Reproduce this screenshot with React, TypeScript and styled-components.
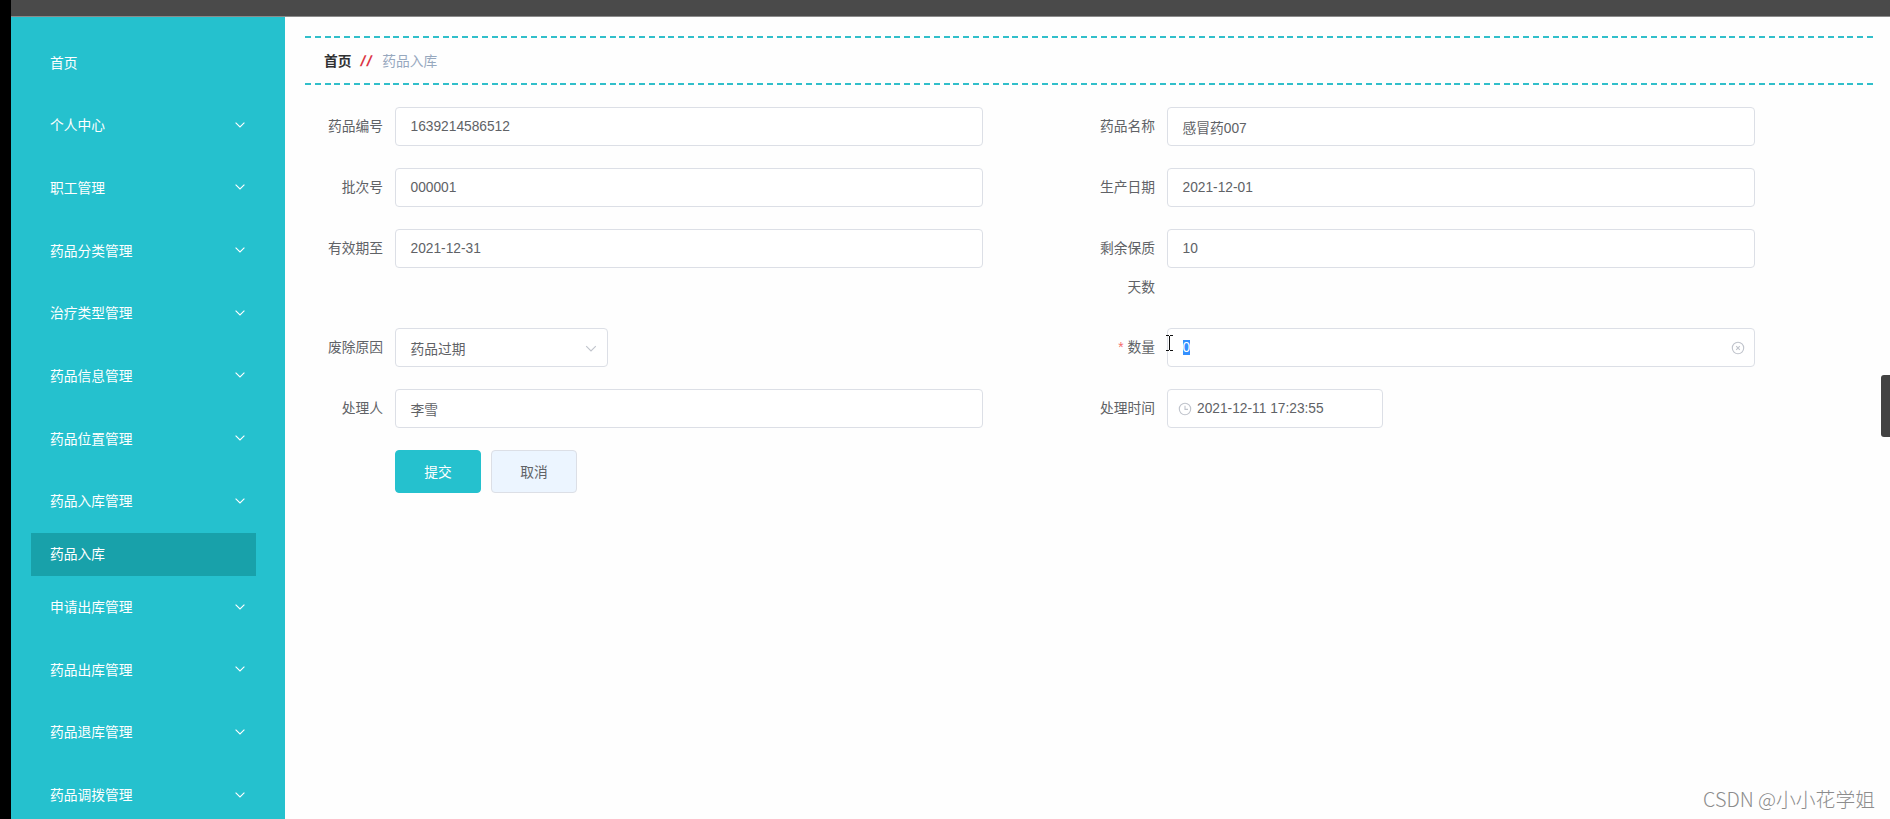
import React from 'react';
import styled, { createGlobalStyle, css } from 'styled-components';

const GlobalStyle = createGlobalStyle`
  * { box-sizing: border-box; }
  html, body { margin: 0; overflow: hidden; background: #fefefe; }
  body {
    font-family: "Liberation Sans", "Noto Sans CJK SC", sans-serif;
    font-size: 13.75px;
    color: #606266;
  }
`;

const Page = styled.div`
  position: relative;
  display: flex;
  width: 1890px;
  height: 819px;
  overflow: hidden;
  padding-left: 11px;
  background: #000;
`;

const Window = styled.div`
  flex: 1;
  display: flex;
  flex-direction: column;
  background: #fefefe;
`;

const TopBar = styled.div`
  flex: none;
  height: 17px;
  background: #4a4a4a;
  border-bottom: 1px solid #8b8b8b;
`;

const Body = styled.div`
  flex: 1;
  min-height: 0;
  display: flex;
`;

const Sidebar = styled.nav`
  width: 274px;
  flex: none;
  padding: 14.2px 29px 0 20px;
  background: #25c1ce;
  overflow: hidden;
`;

const MenuItem = styled.div<{ $active?: boolean }>`
  display: flex;
  align-items: center;
  justify-content: space-between;
  height: 62.7px;
  padding: 0 11px 2px 19px;
  color: #fff;
  ${({ $active }) =>
    $active &&
    css`
      height: 43px;
      background: #18a1aa;
    `}
`;

const MenuArrow = styled.svg`
  width: 10px;
  height: 6px;
  margin-top: 1px;
  fill: none;
  stroke: #fff;
  stroke-width: 1.1;
`;

const Main = styled.main`
  flex: 1;
  padding: 19px 17px 0 20px;
`;

const dashes = 'repeating-linear-gradient(90deg, #31bfca 0 6px, transparent 6px 9.824px)';

const Breadcrumb = styled.div`
  display: flex;
  align-items: center;
  height: 49px;
  padding: 0 0 2px 19px;
  background: ${dashes} top / 100% 2px no-repeat, ${dashes} bottom / 100% 2px no-repeat;
`;

const CrumbHome = styled.span`
  font-weight: 700;
  color: #303133;
`;

const CrumbSlash = styled.span`
  margin: 2px 9px 0 9px;
  font-size: 15px;
  font-weight: 700;
  letter-spacing: 2.2px;
  color: #dc3545;
  transform: skewX(-14deg);
`;

const CrumbCurrent = styled.span`
  color: #97a8be;
`;

const Form = styled.form`
  display: grid;
  grid-template-columns: 772px 772px;
  row-gap: 21.8px;
  padding-top: 22px;
`;

const Field = styled.div`
  display: flex;
  align-items: flex-start;
`;

const Label = styled.label`
  flex: none;
  width: 90px;
  padding: 0 12px 0 17.5px;
  line-height: 39px;
  text-align: right;
`;

const Required = styled.span`
  margin-right: 4px;
  color: #f56c6c;
`;

const InputBox = styled.div<{ $width?: number; $icon?: boolean }>`
  display: flex;
  align-items: center;
  width: ${({ $width = 588 }) => $width}px;
  height: 39px;
  padding: 0 9px 0 ${({ $icon }) => ($icon ? 9.5 : 14.5)}px;
  background: #fff;
  border: 1px solid #dcdfe6;
  border-radius: 4px;
`;

const Value = styled.span`
  flex: 1;
`;

const Selected = styled.span`
  padding: 0;
  background: #3390ff;
  color: #fff;
`;

const Icon = styled.svg`
  flex: none;
  width: 14px;
  height: 14px;
  fill: none;
  stroke: #c0c4cc;
  stroke-width: 1.1;
`;

const ClockIcon = styled(Icon)`
  margin-right: 5.5px;
`;

const Actions = styled.div`
  display: flex;
  gap: 10px;
  padding-left: 90px;
`;

const Button = styled.button<{ $primary?: boolean }>`
  width: 86px;
  height: 43px;
  padding: 0;
  border: 1px solid ${({ $primary }) => ($primary ? '#25c1ce' : '#dcdfe6')};
  border-radius: 4px;
  background: ${({ $primary }) => ($primary ? '#25c1ce' : '#ecf5ff')};
  color: ${({ $primary }) => ($primary ? '#fff' : '#606266')};
  font: inherit;
`;

const SideHandle = styled.div`
  position: absolute;
  top: 375px;
  right: 0;
  width: 9px;
  height: 62px;
  border-radius: 3px 0 0 3px;
  background: #424242;
`;

const TextCursor = styled.svg`
  position: absolute;
  left: 1166px;
  top: 335px;
  width: 7px;
  height: 16px;
  fill: none;
  stroke: #111;
  stroke-width: 1;
`;

const Watermark = styled.div`
  position: absolute;
  left: 1703px;
  top: 785px;
  font: 300 19.8px/28px "Noto Sans CJK SC", sans-serif;
  white-space: nowrap;
  color: #8c8c8c;
`;

type Entry = { text: string; leaf?: boolean; active?: boolean };

const menu: Entry[] = [
  { text: '首页', leaf: true },
  { text: '个人中心' },
  { text: '职工管理' },
  { text: '药品分类管理' },
  { text: '治疗类型管理' },
  { text: '药品信息管理' },
  { text: '药品位置管理' },
  { text: '药品入库管理' },
  { text: '药品入库', leaf: true, active: true },
  { text: '申请出库管理' },
  { text: '药品出库管理' },
  { text: '药品退库管理' },
  { text: '药品调拨管理' },
];

function TextField({ label, value }: { label: string; value: string }) {
  return (
    <Field>
      <Label>{label}</Label>
      <InputBox>
        <Value>{value}</Value>
      </InputBox>
    </Field>
  );
}

export default function App() {
  return (
    <Page>
      <GlobalStyle />
      <Window>
        <TopBar />
        <Body>
          <Sidebar>
            {menu.map((item) => (
              <MenuItem key={item.text} $active={item.active}>
                {item.text}
                {!item.leaf && (
                  <MenuArrow viewBox="0 0 10 6">
                    <path d="M.6.6 5 5 9.4.6" />
                  </MenuArrow>
                )}
              </MenuItem>
            ))}
          </Sidebar>
          <Main>
            <Breadcrumb>
              <CrumbHome>首页</CrumbHome>
              <CrumbSlash>//</CrumbSlash>
              <CrumbCurrent>药品入库</CrumbCurrent>
            </Breadcrumb>
            <Form>
              <TextField label="药品编号" value="1639214586512" />
              <TextField label="药品名称" value="感冒药007" />
              <TextField label="批次号" value="000001" />
              <TextField label="生产日期" value="2021-12-01" />
              <TextField label="有效期至" value="2021-12-31" />
              <TextField label="剩余保质天数" value="10" />
              <Field>
                <Label>废除原因</Label>
                <InputBox $width={213}>
                  <Value>药品过期</Value>
                  <Icon viewBox="0 0 14 14">
                    <path d="M2.2 5.2 7 10 11.8 5.2" />
                  </Icon>
                </InputBox>
              </Field>
              <Field>
                <Label>
                  <Required>*</Required>数量
                </Label>
                <InputBox>
                  <Value>
                    <Selected>0</Selected>
                  </Value>
                  <Icon viewBox="0 0 14 14">
                    <circle cx="7" cy="7" r="5.7" />
                    <path d="M5.2 5.2 8.8 8.8M8.8 5.2 5.2 8.8" />
                  </Icon>
                </InputBox>
              </Field>
              <TextField label="处理人" value="李雪" />
              <Field>
                <Label>处理时间</Label>
                <InputBox $width={216} $icon>
                  <ClockIcon viewBox="0 0 14 14">
                    <circle cx="7" cy="7" r="5.7" />
                    <path d="M7 3.7V7.4H10" />
                  </ClockIcon>
                  <Value>2021-12-11 17:23:55</Value>
                </InputBox>
              </Field>
              <Actions>
                <Button type="button" $primary>提交</Button>
                <Button type="button">取消</Button>
              </Actions>
            </Form>
          </Main>
        </Body>
      </Window>
      <TextCursor viewBox="0 0 7 16">
        <path d="M0 .5H3M4 .5H7M3.5 1V15M0 15.5H3M4 15.5H7" />
      </TextCursor>
      <SideHandle />
      <Watermark>CSDN @小小花学姐</Watermark>
    </Page>
  );
}
